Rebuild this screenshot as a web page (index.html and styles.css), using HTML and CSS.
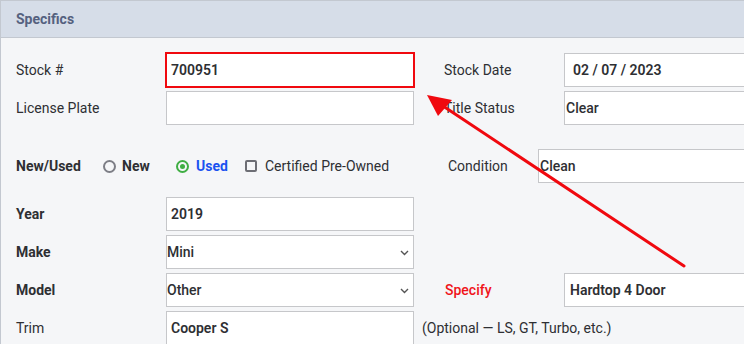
FILE: index.html
```html
<!DOCTYPE html>
<html>
<head>
<meta charset="utf-8">
<link rel="stylesheet" href="styles.css">
</head>
<body>
<div class="panel">
  <div class="panel-head">Specifics</div>
  <div class="panel-body">
    <div class="row r1">
      <div class="lbl">Stock #</div>
      <div class="field hl val-b">700951</div>
      <div class="lbl2 w120">Stock Date</div>
      <div class="field wide val-b pad8">02 / 07 / 2023</div>
    </div>
    <div class="row">
      <div class="lbl">License Plate</div>
      <div class="field"></div>
      <div class="lbl2 w120">Title Status</div>
      <div class="field wide sel pad1">Clear</div>
    </div>
    <div class="row r3">
      <div class="lbl b w87">New/Used</div>
      <div class="opt o1"><span class="radio"></span><span class="b">New</span></div>
      <div class="opt o2"><span class="radio on"></span><span class="b blue">Used</span></div>
      <div class="opt o3"><span class="check"></span><span>Certified Pre-Owned</span></div>
      <div class="cond">Condition</div>
      <div class="field wider sel pad1">Clean</div>
    </div>
    <div class="row r4">
      <div class="lbl b">Year</div>
      <div class="field val-b">2019</div>
    </div>
    <div class="row">
      <div class="lbl b">Make</div>
      <div class="field sel pad0">Mini<svg class="chev" width="9" height="6" viewBox="0 0 9 6"><path d="M1 1l3.5 3.5L8 1" fill="none" stroke="#555" stroke-width="1.4"/></svg></div>
    </div>
    <div class="row">
      <div class="lbl b">Model</div>
      <div class="field sel pad0">Other<svg class="chev" width="9" height="6" viewBox="0 0 9 6"><path d="M1 1l3.5 3.5L8 1" fill="none" stroke="#555" stroke-width="1.4"/></svg></div>
      <div class="lbl2 w119 red">Specify</div>
      <div class="field wide val-b pad5">Hardtop 4 Door</div>
    </div>
    <div class="row">
      <div class="lbl">Trim</div>
      <div class="field val-b">Cooper S</div>
      <div class="hint">(Optional — LS, GT, Turbo, etc.)</div>
    </div>
  </div>
</div>
<svg class="arrow" width="744" height="344" viewBox="0 0 744 344">
  <line x1="684" y1="266" x2="440" y2="104" stroke="#f0090f" stroke-width="3" stroke-linecap="round"/>
  <polygon points="427,95 452,100 438,116" fill="#f0090f"/>
</svg>
</body>
</html>
```
FILE: styles.css
```css
html, body {
  margin: 0;
  padding: 0;
}
body {
  width: 744px;
  height: 344px;
  overflow: hidden;
  position: relative;
  background: #f5f6f8;
  font-family: Roboto, "Liberation Sans", sans-serif;
  font-size: 14px;
  color: #2e2f33;
}
.panel {
  border-left: 1px solid #c3c8d0;
  border-top: 1px solid #c3c8d0;
  height: 343px;
  background: #f5f6f8;
}
.panel-head {
  height: 36px;
  line-height: 36px;
  background: #d6dde8;
  border-bottom: 1px solid #c3c8d0;
  padding-left: 15px;
  font-weight: 700;
  color: #55617f;
}
.panel-body {
  padding: 15px 0 0 15px;
}
.row {
  display: flex;
  align-items: center;
  height: 34px;
  margin-bottom: 4px;
  white-space: nowrap;
}
.r3 {
  margin-top: 24px;
  margin-bottom: 14px;
}
.lbl {
  width: 150px;
  flex: none;
}
.w87 { width: 87px; }
.b { font-weight: 700; }
.field {
  flex: none;
  box-sizing: border-box;
  width: 248px;
  height: 34px;
  border: 1px solid #c6c7ca;
  background: #fff;
  display: flex;
  align-items: center;
  padding-left: 4px;
  position: relative;
}
.val-b { font-weight: 600; }
.hl {
  border: 2px solid #f0090f;
  width: 250px;
  height: 36px;
  margin: 0 -1px;
  padding-left: 4px;
}
.wide { width: 180px; border-right: none; }
.wider { width: 206px; border-right: none; }
.pad8 { padding-left: 8px; }
.pad5 { padding-left: 5px; }
.pad1 { padding-left: 1px; }
.pad0 { padding-left: 0; }
.sel { font-weight: 500; }
.lbl2 {
  flex: none;
  margin-left: 30px;
}
.w120 { width: 120px; }
.w119 { width: 119px; margin-left: 31px; }
.cond {
  flex: none;
  width: 90px;
}
.red { color: #f0141a; font-weight: 500; }
.blue { color: #1a52f0; }
.opt {
  flex: none;
  display: flex;
  align-items: center;
  gap: 6px;
}
.o1 { width: 73px; }
.o2 { width: 69px; gap: 7px; }
.o3 { width: 203px; gap: 8px; }
.radio {
  flex: none;
  box-sizing: border-box;
  width: 13px;
  height: 13px;
  border: 2px solid #7d7e86;
  border-radius: 50%;
  position: relative;
  display: inline-block;
}
.radio.on {
  border-color: #3fae43;
}
.radio.on::after {
  content: "";
  position: absolute;
  left: 2px;
  top: 2px;
  width: 5px;
  height: 5px;
  border-radius: 50%;
  background: #3fae43;
}
.check {
  flex: none;
  box-sizing: border-box;
  width: 12px;
  height: 12px;
  border: 2px solid #6d6e75;
  border-radius: 2px;
  display: inline-block;
}
.chev {
  position: absolute;
  right: 4px;
  top: 14px;
}
.hint {
  margin-left: 8px;
}
.arrow {
  position: absolute;
  left: 0;
  top: 0;
  pointer-events: none;
}
```
